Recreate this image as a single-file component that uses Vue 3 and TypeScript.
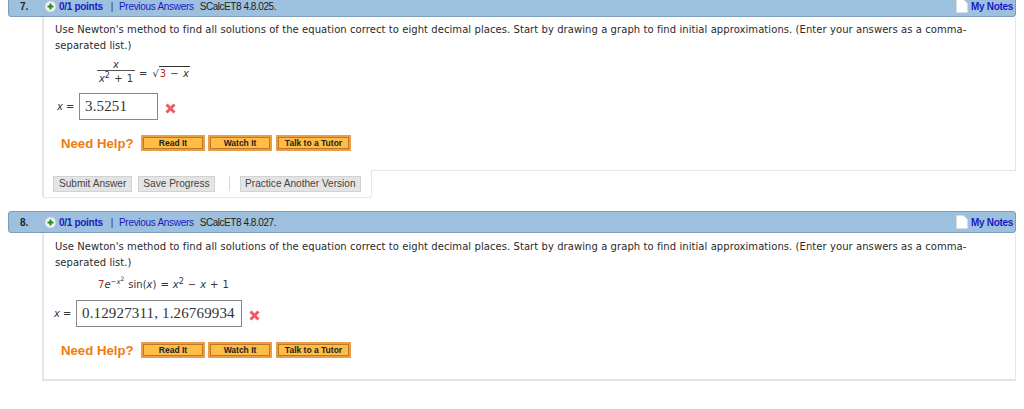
<script setup lang="ts">
interface Q {
  num: string
  code: string
  kind: 'a' | 'b'
  answer: string
}
const questions: Q[] = [
  { num: '7.', code: 'SCalcET8 4.8.025.', kind: 'a', answer: '3.5251' },
  { num: '8.', code: 'SCalcET8 4.8.027.', kind: 'b', answer: '0.12927311, 1.26769934' },
]
const prompt =
  "Use Newton's method to find all solutions of the equation correct to eight decimal places. Start by drawing a graph to find initial approximations. (Enter your answers as a comma-separated list.)"
</script>

<template>
  <main class="page">
    <section v-for="q in questions" :key="q.num" class="question" :class="q.kind">
      <header class="bar">
        <b class="num">{{ q.num }}</b>
        <svg class="plus" width="13" height="13" viewBox="0 0 13 13">
          <circle cx="6.5" cy="6.5" r="5.5" fill="#f4f4f4" stroke="#c4c8cc" />
          <path d="M6.5 3.5v6M3.5 6.5h6" stroke="#1f8a1f" stroke-width="2" />
        </svg>
        <b class="pts">0/1 points</b>
        <span class="sep">|</span>
        <span class="prev">Previous Answers</span>
        <span class="code">{{ q.code }}</span>
        <span class="notes">
          <svg width="12" height="14" viewBox="0 0 12 14">
            <path d="M.5.5h7l4 4v9H.5z" fill="#fff" stroke="#d4dde4" />
          </svg>
          <b>My Notes</b>
        </span>
      </header>
      <div class="body">
        <p class="prompt">{{ prompt }}</p>
        <div v-if="q.kind === 'a'" class="eq eq-a">
          <span class="frac">
            <i class="top">x</i>
            <span class="bot"><i>x</i><sup>2</sup> + 1</span>
          </span>
          <span>=</span>
          <span class="root">√<span class="rad"><em>3</em> − <i>x</i></span></span>
        </div>
        <div v-else class="eq eq-b">
          <em>7</em><i>e</i><sup class="exp">−<i>x</i><sup>2</sup></sup>
          <span>&nbsp;sin(<i>x</i>) = <i>x</i><sup>2</sup> − <i>x</i> + 1</span>
        </div>
        <div class="answer">
          <span class="lbl"><i>x</i> =</span>
          <span class="box">{{ q.answer }}</span>
          <svg class="cross" width="11" height="11" viewBox="0 0 11 11">
            <path d="M1.5 1.5l8 8M9.5 1.5l-8 8" stroke="#ee5a5f" stroke-width="3" />
          </svg>
        </div>
        <div class="help">
          <span class="need">Need Help?</span>
          <span class="hbtn w1">Read It</span>
          <span class="hbtn w2">Watch It</span>
          <span class="hbtn w3">Talk to a Tutor</span>
        </div>
      </div>
      <div v-if="q.kind === 'a'" class="actions">
        <div class="tab">
          <span class="btn">Submit Answer</span>
          <span class="btn">Save Progress</span>
          <span class="divider"></span>
          <span class="btn">Practice Another Version</span>
        </div>
      </div>
    </section>
  </main>
</template>

<style>
html, body { margin: 0; background: #fff; }
</style>

<style scoped>
.page {
  width: 1024px;
  height: 409px;
  overflow: hidden;
  font-family: "DejaVu Sans", Verdana, sans-serif;
  color: #333;
  box-sizing: border-box;
  padding-right: 8px;
}
.question { margin-left: 8px; }
.question.a { margin-top: -5px; }
.question.b { margin-top: 13px; }
.bar {
  height: 22px;
  box-sizing: border-box;
  background: #9dc0de;
  border: 1px solid #7f9db8;
  border-radius: 3px;
  display: flex;
  align-items: center;
  font-family: "Liberation Sans", Arial, sans-serif;
  font-size: 10px;
  letter-spacing: -0.3px;
  position: relative;
  z-index: 1;
}
.num { width: 24px; margin-left: 11px; color: #222; letter-spacing: 0; }
.plus { margin-right: 2px; }
.pts { color: #1a1ac4; margin-right: 8px; }
.sep { color: #333; margin-right: 6px; }
.prev { color: #1a1ac4; margin-right: 6px; }
.code { color: #222; letter-spacing: -0.45px; }
.notes { margin-left: auto; display: flex; align-items: center; gap: 3px; color: #1a1ac4; margin-right: 2px; }
.body {
  margin-left: 34px;
  border-left: 2px solid #e6e6e6;
  border-right: 1px solid #e6e6e6;
  padding: 5px 0 0 11px;
}
.a .body { height: 148px; border-bottom: 1px solid #e6e6e6; }
.b .body { height: 141px; border-bottom: 2px solid #e4e4e4; }
.prompt {
  margin: 0;
  width: 925px;
  font-size: 10px;
  line-height: 15.5px;
  letter-spacing: 0.07px;
  color: #2a2a2a;
}
.b .prompt { padding-top: 1px; margin-bottom: -1px; }
.eq { font-size: 10px; color: #333; }
.eq i { font-style: italic; }
.eq em { font-style: normal; color: #c8202a; }
.eq-a { display: flex; align-items: center; gap: 4px; margin: 7px 0 0 42px; height: 27px; }
.frac { display: inline-flex; flex-direction: column; align-items: center; width: 38px; }
.top { line-height: 10px; border-bottom: 1px solid #555; width: 100%; text-align: center; }
.bot { line-height: 16px; white-space: nowrap; word-spacing: 1px; }
.bot sup, .eq-b sup { font-size: 8px; line-height: 0; }
.root { font-size: 10px; white-space: nowrap; margin-left: 1px; }
.rad { border-top: 1px solid #333; padding: 1px 1px 0; word-spacing: 1px; }
.eq-b { margin: 8px 0 0 43px; height: 15px; line-height: 15px; white-space: nowrap; word-spacing: 0.8px; }
.eq-b sup.exp { font-size: 7px; line-height: 0; }
.eq-b .exp sup { font-size: 6px; }
.answer { display: flex; align-items: center; margin-top: 6px; height: 27px; }
.b .answer { margin-top: 8px; }
.lbl { font-size: 10px; width: 24px; padding-left: 2px; color: #333; box-sizing: border-box; white-space: nowrap; }
.b .lbl { width: 21px; padding-left: 0; margin-left: -1px; margin-right: 1px; }
.box {
  border: 1px solid #888;
  height: 27px;
  line-height: 25px;
  box-sizing: border-box;
  font-family: "Liberation Serif", serif;
  font-size: 15px;
  padding: 0 6px 0 5px;
  color: #333;
  min-width: 79px;
  letter-spacing: 0.15px;
}
.cross { margin-left: 7px; margin-top: 4px; }
.help {
  display: flex;
  align-items: center;
  margin-top: 15px;
  margin-left: 6px;
  font-family: "Liberation Sans", Arial, sans-serif;
}
.need { color: #ee7c0e; font-weight: 700; font-size: 13.2px; width: 80px; white-space: nowrap; }
.hbtn {
  box-sizing: border-box;
  height: 16px;
  line-height: 12px;
  border: 2px solid #eb9c44;
  box-shadow: inset 0 0 0 1px #b87a2a;
  background: #ffbd45;
  color: #222;
  font-weight: 700;
  font-size: 8.5px;
  text-align: center;
}
.w1 { width: 64px; margin-right: 3px; }
.w2 { width: 64px; margin-right: 4px; }
.w3 { width: 75px; }
.actions { margin-left: 34px; margin-top: -1px; }
.tab {
  box-sizing: border-box;
  width: 330px;
  height: 28px;
  background: #fff;
  border: 1px solid #e6e6e6;
  border-left-width: 2px;
  border-top: 0;
  border-radius: 0 0 3px 3px;
  display: flex;
  align-items: center;
  gap: 6px;
  padding-left: 9px;
  position: relative;
  font-family: "Liberation Sans", Arial, sans-serif;
}
.btn {
  background: #e4e4e4;
  border: 1px solid #d2d2d2;
  color: #444;
  font-size: 10.1px;
  line-height: 14px;
  padding: 0 4.5px;
  white-space: nowrap;
}
.btn:first-child { padding: 0 5px; }
.btn:nth-child(2) { padding: 0 4px; }
.divider { width: 1px; height: 15px; background: #d8d8d8; margin: 0 4px 0 8px; }
</style>
